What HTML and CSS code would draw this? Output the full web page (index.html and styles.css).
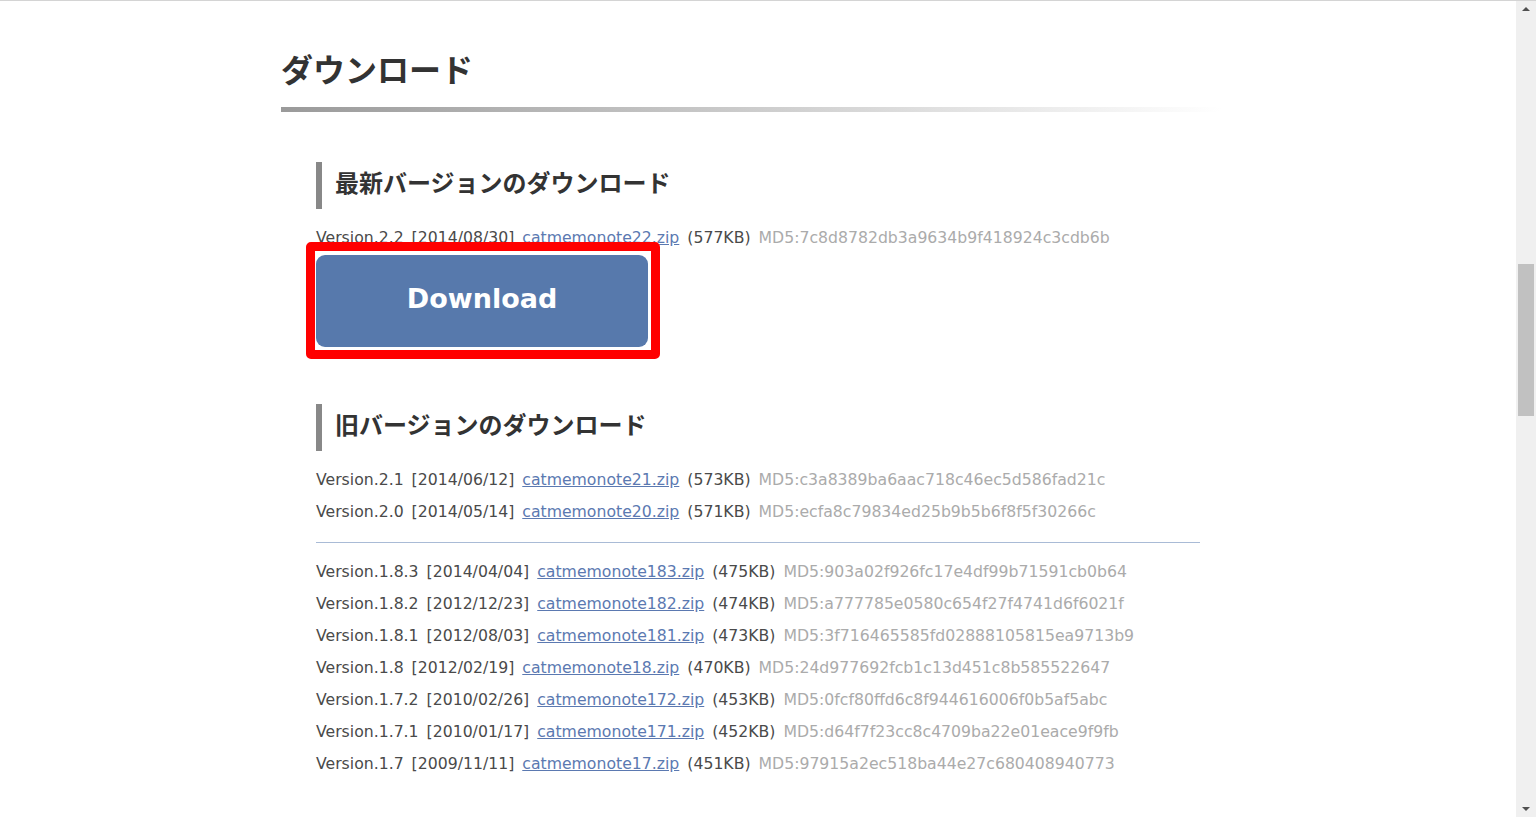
FILE: index.html
```html
<!DOCTYPE html>
<html lang="ja">
<head>
<meta charset="utf-8">
<title>ダウンロード</title>
<link rel="stylesheet" href="styles.css">
</head>
<body>
<div class="topline"></div>
<main class="page">
  <h2 class="title">ダウンロード</h2>

  <section class="sect">
    <h3 class="subtitle">最新バージョンのダウンロード</h3>
    <div class="row">Version.2.2 [2014/08/30] <a href="#">catmemonote22.zip</a> (577KB) <span class="md5">MD5:7c8d8782db3a9634b9f418924c3cdb6b</span></div>
    <div class="btnwrap">
      <a class="dlbtn" href="#">Download</a>
      <span class="mark"></span>
    </div>
  </section>

  <section class="sect sect-old">
    <h3 class="subtitle">旧バージョンのダウンロード</h3>
    <div class="row">Version.2.1 [2014/06/12] <a href="#">catmemonote21.zip</a> (573KB) <span class="md5">MD5:c3a8389ba6aac718c46ec5d586fad21c</span></div>
    <div class="row">Version.2.0 [2014/05/14] <a href="#">catmemonote20.zip</a> (571KB) <span class="md5">MD5:ecfa8c79834ed25b9b5b6f8f5f30266c</span></div>
    <hr class="sep">
    <div class="row">Version.1.8.3 [2014/04/04] <a href="#">catmemonote183.zip</a> (475KB) <span class="md5">MD5:903a02f926fc17e4df99b71591cb0b64</span></div>
    <div class="row">Version.1.8.2 [2012/12/23] <a href="#">catmemonote182.zip</a> (474KB) <span class="md5">MD5:a777785e0580c654f27f4741d6f6021f</span></div>
    <div class="row">Version.1.8.1 [2012/08/03] <a href="#">catmemonote181.zip</a> (473KB) <span class="md5">MD5:3f716465585fd02888105815ea9713b9</span></div>
    <div class="row">Version.1.8 [2012/02/19] <a href="#">catmemonote18.zip</a> (470KB) <span class="md5">MD5:24d977692fcb1c13d451c8b585522647</span></div>
    <div class="row">Version.1.7.2 [2010/02/26] <a href="#">catmemonote172.zip</a> (453KB) <span class="md5">MD5:0fcf80ffd6c8f944616006f0b5af5abc</span></div>
    <div class="row">Version.1.7.1 [2010/01/17] <a href="#">catmemonote171.zip</a> (452KB) <span class="md5">MD5:d64f7f23cc8c4709ba22e01eace9f9fb</span></div>
    <div class="row">Version.1.7 [2009/11/11] <a href="#">catmemonote17.zip</a> (451KB) <span class="md5">MD5:97915a2ec518ba44e27c680408940773</span></div>
  </section>
</main>

<div class="scrollbar">
  <span class="arrow up"></span>
  <span class="thumb"></span>
  <span class="arrow down"></span>
</div>
</body>
</html>
```

FILE: styles.css
```css
html, body {
  margin: 0;
  padding: 0;
  background: #fff;
  overflow: hidden;
  height: 817px;
}

body {
  font-family: "DejaVu Sans", "Noto Sans CJK JP", sans-serif;
  color: #444;
}

.topline {
  height: 1px;
  background: #d4d4d4;
}

.page {
  width: 940px;
  margin-left: 281px;
  padding-top: 45px;
}

.title {
  margin: 0;
  font-family: "Noto Sans CJK JP", sans-serif;
  font-size: 32px;
  font-weight: 700;
  line-height: 44px;
  color: #333;
}

.title::after {
  content: "";
  display: block;
  height: 5px;
  margin-top: 17px;
  background: linear-gradient(to right, #9a9a9a 0%, #d6d6d6 60%, #ffffff 100%);
}

.sect {
  margin-left: 35px;
  width: 884px;
}

.sect:first-of-type {
  margin-top: 50px;
}

.subtitle {
  margin: 0 0 12px;
  height: 39px;
  line-height: 39px;
  padding-bottom: 8px;
  border-left: 6px solid #888;
  padding-left: 13px;
  font-family: "Noto Sans CJK JP", sans-serif;
  font-size: 24px;
  font-weight: 700;
  color: #333;
}

.sect-old {
  margin-top: 57px;
}

.row {
  height: 32px;
  line-height: 34px;
  font-size: 15.7px;
  word-spacing: 3px;
  white-space: nowrap;
  color: #4a4a4a;
}

.row a {
  color: #5b79b1;
  text-decoration: underline;
}

.md5 {
  color: #ababab;
}

.sep {
  margin: 15px 0 12px;
  border: 0;
  height: 1px;
  background: #a9bbd6;
}

.btnwrap {
  position: relative;
  margin-top: 2px;
  width: 332px;
  height: 92px;
}

.dlbtn {
  display: flex;
  align-items: center;
  justify-content: center;
  box-sizing: border-box;
  width: 332px;
  height: 92px;
  padding-bottom: 6px;
  border-radius: 9px;
  background: #5779ac;
  color: #fff;
  font-family: "DejaVu Sans", sans-serif;
  font-weight: 700;
  font-size: 27px;
  text-decoration: none;
}

.mark {
  position: absolute;
  left: -10px;
  top: -13px;
  width: 336px;
  height: 99px;
  border: 9px solid #ff0000;
  border-radius: 5px;
  pointer-events: none;
}

.scrollbar {
  position: fixed;
  top: 1px;
  right: 0;
  width: 20px;
  height: 816px;
  background: #f0f0f0;
}

.thumb {
  position: absolute;
  left: 2px;
  top: 263px;
  width: 16px;
  height: 152px;
  background: #c1c1c1;
}

.arrow {
  position: absolute;
  left: 6px;
  width: 0;
  height: 0;
  border-left: 4px solid transparent;
  border-right: 4px solid transparent;
}

.arrow.up {
  top: 6px;
  border-bottom: 4px solid #505050;
}

.arrow.down {
  bottom: 6px;
  border-top: 4px solid #505050;
}
```
